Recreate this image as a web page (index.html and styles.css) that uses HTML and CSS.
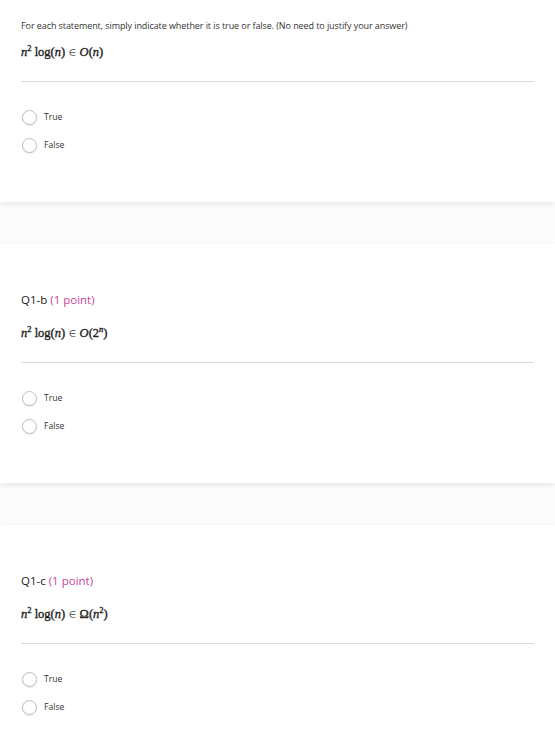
FILE: index.html
```html
<!DOCTYPE html>
<html lang="en">
<head>
<meta charset="utf-8">
<title>Quiz</title>
<link rel="stylesheet" href="styles.css">
</head>
<body>
<main class="quiz">
  <section class="card card-first">
    <p class="instructions">For each statement, simply indicate whether it is true or false. (No need to justify your answer)</p>
    <p class="math"><i>n</i><sup>2</sup> log(<i>n</i>) <span class="rel">∈</span> <i class="cal">O</i>(<i>n</i>)</p>
    <hr class="divider">
    <div class="options">
      <label class="option"><span class="radio"></span><span class="opt-text">True</span></label>
      <label class="option"><span class="radio"></span><span class="opt-text">False</span></label>
    </div>
  </section>

  <section class="card">
    <h2 class="q-title">Q1-b <span class="points">(1 point)</span></h2>
    <p class="math"><i>n</i><sup>2</sup> log(<i>n</i>) <span class="rel">∈</span> <i class="cal">O</i>(2<sup><i>n</i></sup>)</p>
    <hr class="divider">
    <div class="options">
      <label class="option"><span class="radio"></span><span class="opt-text">True</span></label>
      <label class="option"><span class="radio"></span><span class="opt-text">False</span></label>
    </div>
  </section>

  <section class="card">
    <h2 class="q-title">Q1-c <span class="points">(1 point)</span></h2>
    <p class="math"><i>n</i><sup>2</sup> log(<i>n</i>) <span class="rel">∈</span> Ω(<i>n</i><sup>2</sup>)</p>
    <hr class="divider">
    <div class="options">
      <label class="option"><span class="radio"></span><span class="opt-text">True</span></label>
      <label class="option"><span class="radio"></span><span class="opt-text">False</span></label>
    </div>
  </section>
</main>
</body>
</html>
```

FILE: styles.css
```css
html, body {
  margin: 0;
  padding: 0;
}

body {
  background: #fcfcfc;
  font-family: "Open Sans", "Noto Sans", sans-serif;
  color: #333;
}

.quiz {
  display: flex;
  flex-direction: column;
  gap: 42px;
}

.card {
  background: #ffffff;
  box-shadow: 0 2px 6px rgba(0, 0, 0, 0.09);
  padding: 48px 21px 47px 21px;
  display: flex;
  flex-direction: column;
}

.card-first {
  padding-top: 19px;
}

.instructions {
  margin: 0 0 10px 0;
  height: 14px;
  font-size: 9px;
  line-height: 14px;
  color: #333;
  letter-spacing: -0.08px;
  overflow: hidden;
}

.q-title {
  margin: 0 0 16px 0;
  height: 16px;
  font-size: 11.5px;
  line-height: 16px;
  font-weight: 400;
  color: #222;
  overflow: hidden;
}

.points {
  color: #c0489c;
}

.math {
  margin: 0;
  height: 18px;
  font-family: "Liberation Serif", "DejaVu Serif", serif;
  font-size: 12.5px;
  line-height: 18px;
  color: #222;
  font-weight: 400;
  -webkit-text-stroke: 0.35px #222;
}

.math i {
  font-style: italic;
}

.math sup {
  font-size: 8.5px;
  line-height: 0;
  vertical-align: 5px;
}

.math .rel {
  font-family: "DejaVu Serif", serif;
  font-size: 11px;
  color: #666;
  -webkit-text-stroke: 0;
}

.divider {
  margin: 20px 0 0 0;
  border: 0;
  border-top: 1px solid #dcdcdc;
  height: 0;
}

.options {
  margin-top: 25px;
  display: flex;
  flex-direction: column;
  gap: 8px;
}

.option {
  display: flex;
  align-items: center;
  height: 20px;
  gap: 7px;
  padding-left: 1px;
}

.radio {
  width: 13px;
  height: 13px;
  border-radius: 50%;
  border: 1px solid #bdbdbd;
  box-shadow: 0 1px 1px rgba(0, 0, 0, 0.08);
  background: #fff;
  flex: none;
}

.opt-text {
  font-size: 8.6px;
  line-height: 12px;
  color: #333;
}
```
